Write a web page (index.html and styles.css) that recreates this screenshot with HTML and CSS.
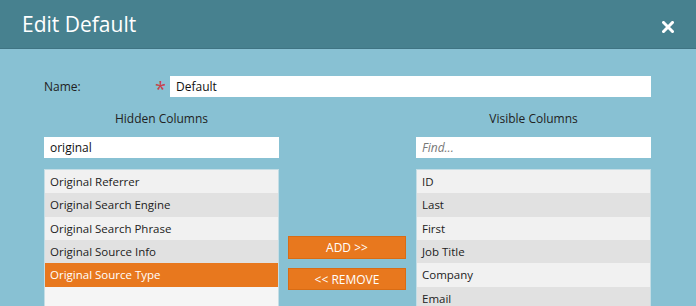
FILE: index.html
```
<!DOCTYPE html>
<html>
<head>
<meta charset="utf-8">
<link rel="stylesheet" href="styles.css">
</head>
<body>
<div class="dialog">
  <div class="header">
    <div class="title">Edit Default</div>
    <svg class="close" width="12" height="12" viewBox="0 0 12 12"><path d="M1.5 1.5 L10.5 10.5 M10.5 1.5 L1.5 10.5" stroke="#fff" stroke-width="3" stroke-linecap="square"/></svg>
  </div>
  <div class="content">
    <div class="name-row">
      <span class="label">Name:</span>
      <span class="req">*</span>
      <div class="field name-field">Default</div>
    </div>
    <div class="columns">
      <div class="col">
        <div class="col-title">Hidden Columns</div>
        <div class="field">original</div>
        <div class="list">
          <div class="row">Original Referrer</div>
          <div class="row alt">Original Search Engine</div>
          <div class="row">Original Search Phrase</div>
          <div class="row alt">Original Source Info</div>
          <div class="row selected">Original Source Type</div>
          <div class="row empty"></div>
        </div>
      </div>
      <div class="actions">
        <div class="btn">ADD &gt;&gt;</div>
        <div class="btn">&lt;&lt; REMOVE</div>
      </div>
      <div class="col">
        <div class="col-title">Visible Columns</div>
        <div class="field placeholder">Find...</div>
        <div class="list">
          <div class="row">ID</div>
          <div class="row alt">Last</div>
          <div class="row">First</div>
          <div class="row alt">Job Title</div>
          <div class="row">Company</div>
          <div class="row alt">Email</div>
        </div>
      </div>
    </div>
  </div>
</div>
</body>
</html>
```
FILE: styles.css
```
html, body {
  margin: 0;
  padding: 0;
}
body {
  background: #88c1d3;
  font-family: "Open Sans", "DejaVu Sans", sans-serif;
  color: #222;
  font-size: 12px;
  width: 696px;
  height: 306px;
  overflow: hidden;
}
.header {
  height: 48px;
  background: #47818f;
  border-bottom: 1px solid #3f7483;
  display: flex;
  align-items: center;
  justify-content: space-between;
  padding: 0 22px 0 22px;
}
.title {
  color: #fff;
  font-size: 21px;
  line-height: 30px;
  margin-top: -1px;
}
.close {
  display: block;
  margin-top: 5px;
}
.content {
  padding: 27px 45px 0 44px;
}
.name-row {
  display: flex;
  align-items: center;
  height: 21px;
}
.label {
  width: 111px;
  line-height: 21px;
}
.req {
  color: #c8424a;
  font-size: 20px;
  line-height: 21px;
  width: 15px;
  margin-top: 4px;
}
.field {
  background: #fff;
  height: 21px;
  line-height: 21px;
  padding: 0 6px;
  box-sizing: border-box;
  color: #111;
  font-size: 12px;
}
.name-field {
  flex: 1;
}
.placeholder {
  color: #777;
  font-style: italic;
}
.columns {
  display: flex;
  margin-top: 12px;
}
.col {
  width: 235px;
}
.col-title {
  text-align: center;
  line-height: 20px;
  height: 20px;
  margin-bottom: 8px;
  font-size: 12px;
}
.list {
  margin-top: 11px;
  border: 1px solid #c4dde5;
  border-bottom: none;
  background: #f5f5f5;
  height: 200px;
}
.row {
  height: 23.33px;
  line-height: 23px;
  padding-left: 5px;
  background: #f1f1f1;
  color: #222;
  font-size: 11.5px;
}
.row.alt {
  background: #e1e1e1;
}
.row.selected {
  background: #e8781e;
  color: #fff;
}
.row.empty {
  background: #f5f5f5;
}
.actions {
  width: 137px;
  box-sizing: border-box;
  padding: 127px 10px 0 9px;
  display: flex;
  flex-direction: column;
  gap: 9px;
}
.btn {
  height: 22.5px;
  line-height: 22px;
  background: #e8781e;
  border: 1px solid #d96c14;
  box-sizing: border-box;
  color: #fff;
  text-align: center;
  font-size: 12px;
}
```
